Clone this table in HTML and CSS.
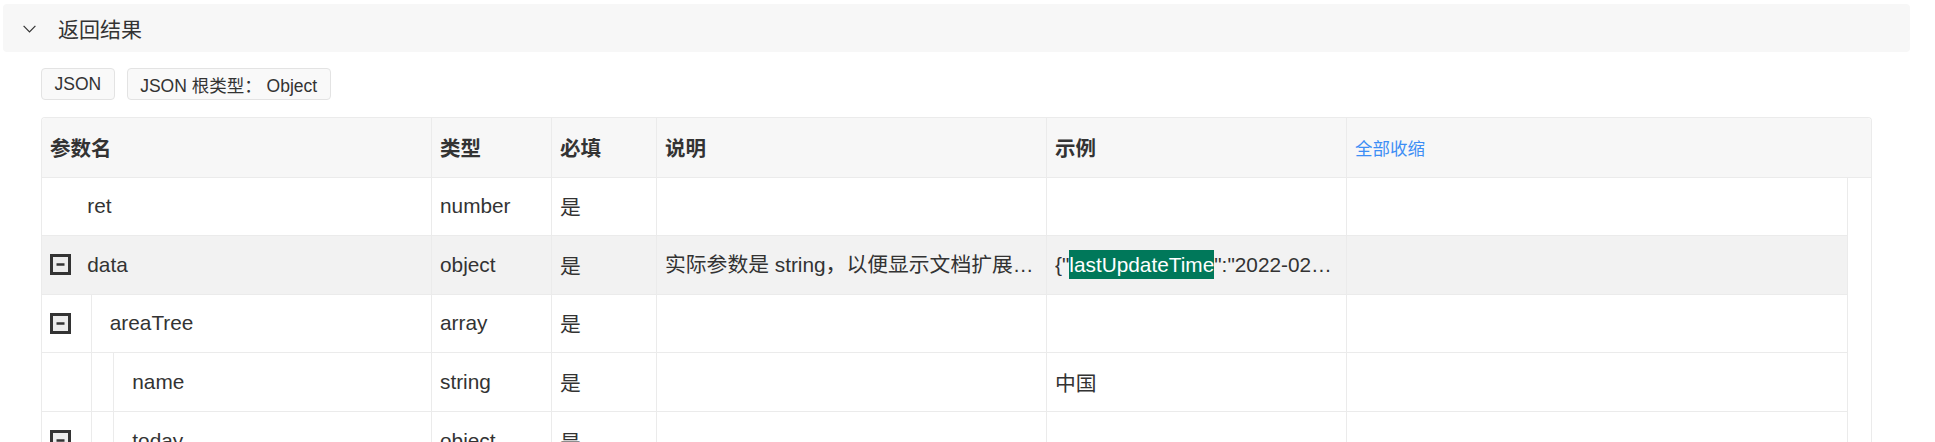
FILE: index.html
```html
<!DOCTYPE html>
<html lang="zh-CN">
<head>
<meta charset="utf-8">
<title>返回结果</title>
<link rel="stylesheet" href="styles.css">
</head>
<body>
<div class="page">
  <div class="section-head">
    <svg class="chev" width="13" height="8" viewBox="0 0 13 8"><polyline points="0.6,0.8 6.5,6.8 12.4,0.8" fill="none" stroke="#333" stroke-width="1.2"/></svg>
    <span class="section-title">返回结果</span>
  </div>
  <div class="tags">
    <span class="tag">JSON</span>
    <span class="tag">JSON 根类型： Object</span>
  </div>
  <div class="table">
    <div class="thead">
      <div class="th">参数名</div>
      <div class="th">类型</div>
      <div class="th">必填</div>
      <div class="th">说明</div>
      <div class="th">示例</div>
      <div class="th th-last"><a class="link">全部收缩</a></div>
    </div>
    <div class="tbody">
      <div class="tr">
        <div class="td td-name"><span class="exp"></span><span class="nm">ret</span></div>
        <div class="td">number</div>
        <div class="td">是</div>
        <div class="td"></div>
        <div class="td"></div>
        <div class="td"></div>
      </div>
      <div class="tr tr-active">
        <div class="td td-name"><span class="exp"><svg width="21" height="21" viewBox="0 0 21 21"><rect x="1.5" y="1.5" width="18" height="18" fill="#ececec" stroke="#333" stroke-width="3"/><line x1="6.5" y1="10.5" x2="14.5" y2="10.5" stroke="#333" stroke-width="2.5"/></svg></span><span class="nm">data</span></div>
        <div class="td">object</div>
        <div class="td">是</div>
        <div class="td"><span class="ell">实际参数是 string，以便显示文档扩展字段结构</span></div>
        <div class="td"><span class="ell">{"<span class="hl">lastUpdateTime</span>":"2022-02-22 10:30:15"}</span></div>
        <div class="td"></div>
      </div>
      <div class="tr">
        <div class="td td-name"><span class="exp"><svg width="21" height="21" viewBox="0 0 21 21"><rect x="1.5" y="1.5" width="18" height="18" fill="#ececec" stroke="#333" stroke-width="3"/><line x1="6.5" y1="10.5" x2="14.5" y2="10.5" stroke="#333" stroke-width="2.5"/></svg></span><span class="indent"></span><span class="nm">areaTree</span></div>
        <div class="td">array</div>
        <div class="td">是</div>
        <div class="td"></div>
        <div class="td"></div>
        <div class="td"></div>
      </div>
      <div class="tr">
        <div class="td td-name"><span class="exp"></span><span class="indent"></span><span class="indent"></span><span class="nm">name</span></div>
        <div class="td">string</div>
        <div class="td">是</div>
        <div class="td"></div>
        <div class="td">中国</div>
        <div class="td"></div>
      </div>
      <div class="tr">
        <div class="td td-name"><span class="exp"><svg width="21" height="21" viewBox="0 0 21 21"><rect x="1.5" y="1.5" width="18" height="18" fill="#ececec" stroke="#333" stroke-width="3"/><line x1="6.5" y1="10.5" x2="14.5" y2="10.5" stroke="#333" stroke-width="2.5"/></svg></span><span class="indent"></span><span class="indent"></span><span class="nm">today</span></div>
        <div class="td">object</div>
        <div class="td">是</div>
        <div class="td"></div>
        <div class="td"></div>
        <div class="td"></div>
      </div>
    </div>
  </div>
</div>
</body>
</html>
```

FILE: styles.css
```css
* { box-sizing: border-box; }
html, body { margin: 0; padding: 0; background: #fff; }
body {
  width: 1935px;
  height: 442px;
  overflow: hidden;
  font-family: "Liberation Sans", "Noto Sans CJK SC", sans-serif;
  color: #333;
}
.page { padding-top: 4px; }

.section-head {
  margin-left: 3px;
  width: 1907px;
  height: 48px;
  background: #f7f7f7;
  border-radius: 4px;
  display: flex;
  align-items: center;
  padding-left: 20px;
}
.chev { display: block; margin-top: 1px; }
.section-title { margin-left: 22px; font-size: 21px; }

.tags {
  display: flex;
  gap: 12px;
  margin: 16px 0 0 41px;
}
.tag {
  height: 32px;
  padding: 0 12.5px;
  border: 1px solid #e3e3e3;
  border-radius: 4px;
  background: #f9f9f9;
  font-size: 17.5px;
  display: flex;
  align-items: center;
}

.table {
  margin: 16.5px 0 0 41px;
  width: 1831px;
  border: 1px solid #ebebeb;
  border-bottom: none;
  border-radius: 4px 4px 0 0;
}
.thead {
  display: grid;
  grid-template-columns: 390px 120px 105px 390px 300px 524px;
  height: 60px;
  background: #f7f7f7;
  border-bottom: 1px solid #ebebeb;
  border-radius: 4px 4px 0 0;
}
.th {
  display: flex;
  align-items: center;
  padding: 0 8px;
  font-size: 20.5px;
  font-weight: bold;
  border-right: 1px solid #ebebeb;
}
.th-last { border-right: none; font-weight: normal; }
.link { color: #3d8ef5; font-size: 17.5px; cursor: pointer; }

.tbody { width: 1806px; }
.tr {
  display: grid;
  grid-template-columns: 390px 120px 105px 390px 300px 501px;
  height: 58.6px;
  border-bottom: 1px solid #ebebeb;
  background: #fff;
}
.tr-active { background: #f2f2f2; }
.td {
  display: flex;
  align-items: center;
  padding: 0 8px;
  min-width: 0;
  font-size: 20.8px;
  white-space: nowrap;
  border-right: 1px solid #ebebeb;
}
.td-name { align-items: stretch; }
.exp {
  width: 21px;
  flex: none;
  margin-right: 16.3px;
  display: flex;
  align-items: center;
}
.exp svg { display: block; }
.indent {
  flex: none;
  width: 19px;
  margin-left: 3.5px;
  border-left: 1px solid #ebebeb;
}
.nm { display: flex; align-items: center; }
.ell {
  display: block;
  min-width: 0;
  overflow: hidden;
  text-overflow: ellipsis;
  white-space: nowrap;
  line-height: 30px;
}
.hl { background: #00785a; color: #fff; padding: 3px 0; }
```
